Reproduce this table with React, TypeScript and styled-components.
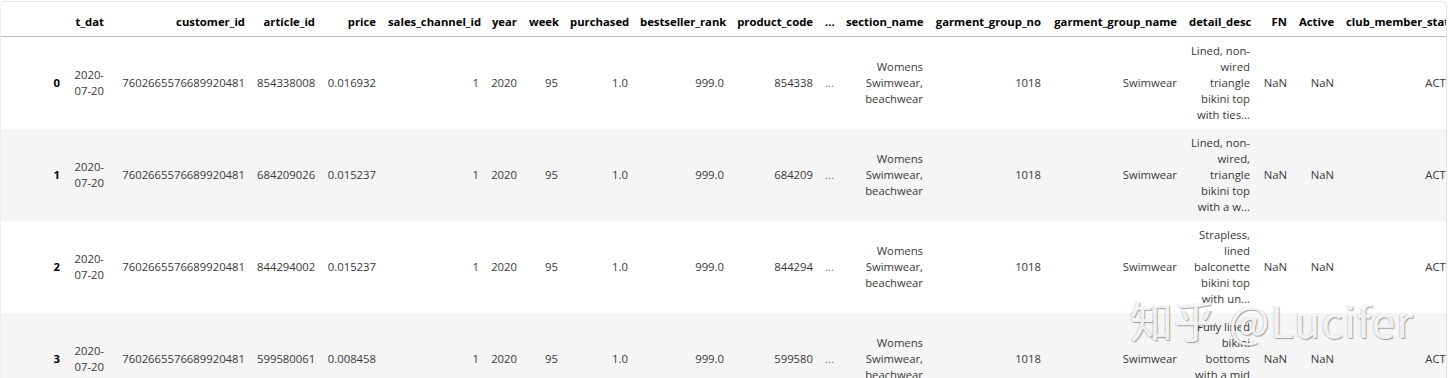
import React from "react";
import styled, { createGlobalStyle } from "styled-components";

const Global = createGlobalStyle`
  html, body { margin: 0; padding: 0; background: #fff; }
  body { font-family: "Open Sans", "Noto Sans", sans-serif; }
`;

const Page = styled.div`
  position: relative;
  width: 1450px;
  height: 378px;
  overflow: hidden;
  background: #fff;
`;

const Frame = styled.div`
  box-sizing: border-box;
  width: 1447px;
  height: 400px;
  margin-top: 1px;
  padding-top: 6px;
  border-top: 1px solid #e3e3e3;
  border-right: 1px solid #e3e3e3;
  border-left: 1px solid #eeeeee;
  border-radius: 6px 6px 0 0;
  overflow: hidden;
`;

const Table = styled.table`
  border-collapse: collapse;
  table-layout: fixed;
  width: 1468px;
  margin-left: -1px;
  font-size: 11.3px;
  line-height: 16px;
  color: #383838;
`;

const HeadCell = styled.th`
  padding: 6px;
  text-align: right;
  vertical-align: middle;
  font-weight: 700;
  color: #000;
  white-space: nowrap;
  overflow: hidden;
  border-bottom: 1px solid #bdbdbd;
`;

const Row = styled.tr<{ $shade: boolean }>`
  background: ${(p) => (p.$shade ? "#f5f5f5" : "#ffffff")};
`;

const IndexCell = styled.th`
  padding: 6px;
  text-align: right;
  vertical-align: middle;
  font-weight: 700;
  color: #000;
`;

const Cell = styled.td<{ $muted?: boolean }>`
  padding: 6px;
  text-align: right;
  vertical-align: middle;
  white-space: nowrap;
  overflow: hidden;
  color: ${(p) => (p.$muted ? "#777" : "#383838")};
`;

const Line = styled.span`
  display: block;
`;

const Watermark = styled.div`
  position: absolute;
  left: 1130px;
  top: 292px;
  font-family: "Noto Sans CJK SC", "Noto Sans", sans-serif;
  font-size: 43px;
  line-height: 54px;
  font-weight: 400;
  letter-spacing: 1px;
  color: rgba(255, 255, 255, 0.9);
  text-shadow: 1px 1px 1px rgba(0, 0, 0, 0.35), -1px 0 1px rgba(0, 0, 0, 0.15);
  white-space: nowrap;
  pointer-events: none;
`;

const columns: { name: string; width: number }[] = [
  { name: "", width: 66 },
  { name: "t_dat", width: 44 },
  { name: "customer_id", width: 141 },
  { name: "article_id", width: 70 },
  { name: "price", width: 61 },
  { name: "sales_channel_id", width: 103 },
  { name: "year", width: 38 },
  { name: "week", width: 41 },
  { name: "purchased", width: 70 },
  { name: "bestseller_rank", width: 96 },
  { name: "product_code", width: 89 },
  { name: "...", width: 21 },
  { name: "section_name", width: 89 },
  { name: "garment_group_no", width: 118 },
  { name: "garment_group_name", width: 136 },
  { name: "detail_desc", width: 73 },
  { name: "FN", width: 37 },
  { name: "Active", width: 47 },
  { name: "club_member_status", width: 128 },
];

type RowData = {
  article: string;
  price: string;
  product: string;
  desc: string[];
};

const rows: RowData[] = [
  {
    article: "854338008",
    price: "0.016932",
    product: "854338",
    desc: ["Lined, non-", "wired", "triangle", "bikini top", "with ties..."],
  },
  {
    article: "684209026",
    price: "0.015237",
    product: "684209",
    desc: ["Lined, non-", "wired,", "triangle", "bikini top", "with a w..."],
  },
  {
    article: "844294002",
    price: "0.015237",
    product: "844294",
    desc: ["Strapless,", "lined", "balconette", "bikini top", "with un..."],
  },
  {
    article: "599580061",
    price: "0.008458",
    product: "599580",
    desc: ["Fully lined", "bikini", "bottoms", "with a mid", "waist..."],
  },
];

const Lines = ({ items }: { items: string[] }) => (
  <>
    {items.map((t, i) => (
      <Line key={i}>{t}</Line>
    ))}
  </>
);

export default function App() {
  return (
    <Page>
      <Global />
      <Frame>
        <Table>
          <colgroup>
            {columns.map((c, i) => (
              <col key={i} style={{ width: c.width }} />
            ))}
          </colgroup>
          <thead>
            <tr>
              {columns.map((c, i) => (
                <HeadCell key={i}>{c.name}</HeadCell>
              ))}
            </tr>
          </thead>
          <tbody>
            {rows.map((r, i) => (
              <Row key={i} $shade={i % 2 === 1}>
                <IndexCell>{i}</IndexCell>
                <Cell>
                  <Lines items={["2020-", "07-20"]} />
                </Cell>
                <Cell>7602665576689920481</Cell>
                <Cell>{r.article}</Cell>
                <Cell>{r.price}</Cell>
                <Cell>1</Cell>
                <Cell>2020</Cell>
                <Cell>95</Cell>
                <Cell>1.0</Cell>
                <Cell>999.0</Cell>
                <Cell>{r.product}</Cell>
                <Cell $muted>...</Cell>
                <Cell>
                  <Lines items={["Womens", "Swimwear,", "beachwear"]} />
                </Cell>
                <Cell>1018</Cell>
                <Cell>Swimwear</Cell>
                <Cell>
                  <Lines items={r.desc} />
                </Cell>
                <Cell>NaN</Cell>
                <Cell>NaN</Cell>
                <Cell>ACTIVE</Cell>
              </Row>
            ))}
          </tbody>
        </Table>
      </Frame>
      <Watermark>知乎 @Lucifer</Watermark>
    </Page>
  );
}
